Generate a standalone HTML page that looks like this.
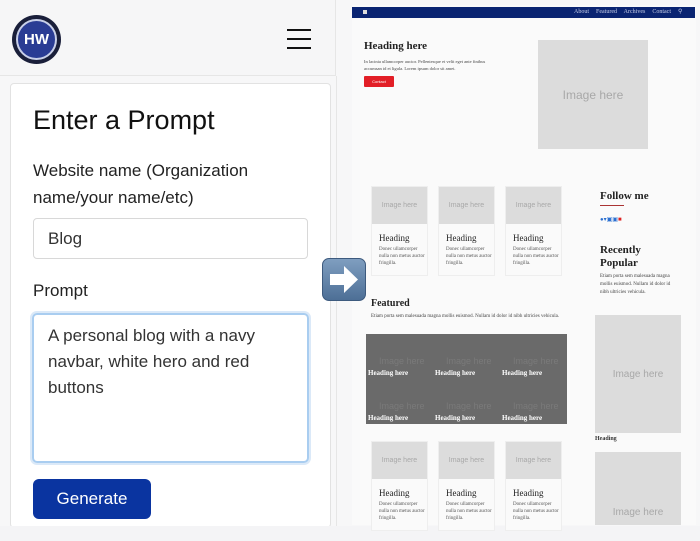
<!DOCTYPE html>
<html><head><style>
*{margin:0;padding:0;box-sizing:border-box}
body{width:700px;height:541px;overflow:hidden;background:#f7f7f8;position:relative;font-family:"Liberation Sans",sans-serif}
.a{position:absolute}
.serif{font-family:"Liberation Serif",serif}
.img{background:#dcdcdc;color:#a8a8a8;display:flex;align-items:center;justify-content:center;font-family:"Liberation Sans",sans-serif}
.card{position:absolute;width:57px;height:90px;background:#fafafa;border:1px solid #eee}
.card .img{height:37px;font-size:7px}
.card h4{font-family:"Liberation Serif",serif;font-size:9px;font-weight:normal;color:#222;margin:9px 0 0 7px}
.card p{font-family:"Liberation Serif",serif;font-size:5px;line-height:7px;color:#555;margin:3px 0 0 7px}
.ft{position:absolute;width:66px;height:44px;color:#7a7a7a;font-size:9px}
.ft b{position:absolute;left:2px;top:30px;color:#fff;font-family:"Liberation Serif",serif;font-size:7px}
.ft span{position:absolute;left:13px;top:17px}
</style></head><body>
<!-- left -->
<div class="a" style="left:0;top:0;width:336px;height:76px;background:#f6f6f7;border-right:1px solid #e6e6e6;border-bottom:1px solid #e6e6e6"></div>
<div class="a" style="left:12px;top:15px;width:49px;height:49px;border-radius:50%;background:#1a1f3a;"></div>
<div class="a" style="left:16px;top:19px;width:41px;height:41px;border-radius:50%;background:#2a3c94;border:2px solid #c8cfe8;color:#fff;font-size:15px;font-weight:bold;display:flex;align-items:center;justify-content:center">HW</div>
<div class="a" style="left:287px;top:29px;width:24px;height:2px;background:#111"></div>
<div class="a" style="left:287px;top:38px;width:24px;height:2px;background:#111"></div>
<div class="a" style="left:287px;top:47px;width:24px;height:2px;background:#111"></div>
<div class="a" style="left:336px;top:76px;width:1px;height:450px;background:#e6e6e6"></div>
<div class="a" style="left:10px;top:83px;width:321px;height:445px;background:#fff;border:1px solid #e2e2e2;border-radius:4px"></div>
<div class="a" style="left:33px;top:105px;font-size:27px;color:#111">Enter a Prompt</div>
<div class="a" style="left:33px;top:157px;width:270px;font-size:17px;line-height:27px;color:#222">Website name (Organization name/your name/etc)</div>
<div class="a" style="left:33px;top:218px;width:275px;height:41px;border:1px solid #d8d8d8;border-radius:4px;font-size:17px;color:#333;padding:10px 0 0 14px">Blog</div>
<div class="a" style="left:33px;top:281px;font-size:17px;color:#222">Prompt</div>
<div class="a" style="left:32px;top:313px;width:277px;height:150px;border:2px solid #a9cdf0;border-radius:5px;box-shadow:0 0 0 2px #dbe9f8;font-size:17px;line-height:26px;color:#333;padding:8px 14px">A personal blog with a navy navbar, white hero and red buttons</div>
<div class="a" style="left:33px;top:479px;width:118px;height:40px;background:#0a34a0;border-radius:6px;color:#fff;font-size:17px;display:flex;align-items:center;justify-content:center">Generate</div>
<div class="a" style="left:0;top:526px;width:700px;height:15px;background:#f4f4f6"></div>
<!-- right -->
<div class="a" style="left:352px;top:5px;width:344px;height:520px;background:#fafafa"></div>
<div class="a" style="left:352px;top:7px;width:343px;height:11px;background:#0a2472"></div>
<div class="a" style="left:363px;top:10px;width:4px;height:4px;background:#ddd"></div>
<div class="a serif" style="left:574px;top:8px;font-size:6px;color:#c6cde8;word-spacing:2px">About&nbsp; Featured&nbsp; Archives&nbsp; Contact&nbsp; &#9906;</div>
<div class="a serif" style="left:364px;top:40px;font-size:11px;font-weight:bold;color:#222">Heading here</div>
<div class="a serif" style="left:364px;top:58px;width:130px;font-size:4.5px;line-height:7px;color:#444">In lacinia ullamcorper auctor. Pellentesque et velit eget ante finibus accumsan id et ligula. Lorem ipsum dolor sit amet.</div>
<div class="a" style="left:364px;top:76px;width:30px;height:11px;background:#e21e26;border-radius:1px;color:#fff;font-size:4px;display:flex;align-items:center;justify-content:center">Contact</div>
<div class="a img" style="left:538px;top:40px;width:110px;height:109px;font-size:12px">Image here</div>
<div class="card" style="left:371px;top:186px"><div class="img">Image here</div><h4>Heading</h4><p>Donec ullamcorper nulla non metus auctor fringilla.</p></div>
<div class="card" style="left:438px;top:186px"><div class="img">Image here</div><h4>Heading</h4><p>Donec ullamcorper nulla non metus auctor fringilla.</p></div>
<div class="card" style="left:505px;top:186px"><div class="img">Image here</div><h4>Heading</h4><p>Donec ullamcorper nulla non metus auctor fringilla.</p></div>
<div class="a serif" style="left:600px;top:190px;font-size:11px;font-weight:bold;color:#222">Follow me</div>
<div class="a" style="left:600px;top:205px;width:24px;height:1px;background:#a33"></div>
<div class="a" style="left:600px;top:216px;font-size:6px;color:#2a6fd0;letter-spacing:0">●▾▣▣<span style="color:#d22">■</span></div>
<div class="a serif" style="left:600px;top:244px;width:70px;font-size:11px;font-weight:bold;line-height:13px;color:#222">Recently Popular</div>
<div class="a serif" style="left:600px;top:273px;width:75px;font-size:5px;line-height:8px;color:#444">Etiam porta sem malesuada magna mollis euismod. Nullam id dolor id nibh ultricies vehicula.</div>
<div class="a img" style="left:595px;top:315px;width:86px;height:118px;font-size:10px">Image here</div>
<div class="a serif" style="left:595px;top:436px;font-size:6px;font-weight:bold;color:#333">Heading</div>
<div class="a img" style="left:595px;top:452px;width:86px;height:73px;font-size:10px;align-items:flex-end;padding-bottom:7px">Image here</div>
<div class="a serif" style="left:371px;top:298px;font-size:10px;font-weight:bold;color:#222">Featured</div>
<div class="a serif" style="left:371px;top:313px;width:200px;font-size:5px;line-height:8px;color:#444">Etiam porta sem malesuada magna mollis euismod. Nullam id dolor id nibh ultricies vehicula.</div>
<div class="a" style="left:366px;top:334px;width:201px;height:90px;background:#6a6a6a"></div>
<div class="ft" style="left:366px;top:339px"><span>Image here</span><b>Heading here</b></div>
<div class="ft" style="left:433px;top:339px"><span>Image here</span><b>Heading here</b></div>
<div class="ft" style="left:500px;top:339px"><span>Image here</span><b>Heading here</b></div>
<div class="ft" style="left:366px;top:384px"><span>Image here</span><b>Heading here</b></div>
<div class="ft" style="left:433px;top:384px"><span>Image here</span><b>Heading here</b></div>
<div class="ft" style="left:500px;top:384px"><span>Image here</span><b>Heading here</b></div>
<div class="card" style="left:371px;top:441px"><div class="img">Image here</div><h4>Heading</h4><p>Donec ullamcorper nulla non metus auctor fringilla.</p></div>
<div class="card" style="left:438px;top:441px"><div class="img">Image here</div><h4>Heading</h4><p>Donec ullamcorper nulla non metus auctor fringilla.</p></div>
<div class="card" style="left:505px;top:441px"><div class="img">Image here</div><h4>Heading</h4><p>Donec ullamcorper nulla non metus auctor fringilla.</p></div>
<!-- arrow -->
<div class="a" style="left:322px;top:258px;width:44px;height:43px;border-radius:7px;background:linear-gradient(#7f9ec0,#4d6f96);border:1px solid #3d5a7e"></div>
<svg class="a" style="left:322px;top:258px" width="44" height="43" viewBox="0 0 44 43"><path d="M8 16 H22 V8 L36 21.5 L22 35 V27 H8 Z" fill="#fff"/></svg>
</body></html>
